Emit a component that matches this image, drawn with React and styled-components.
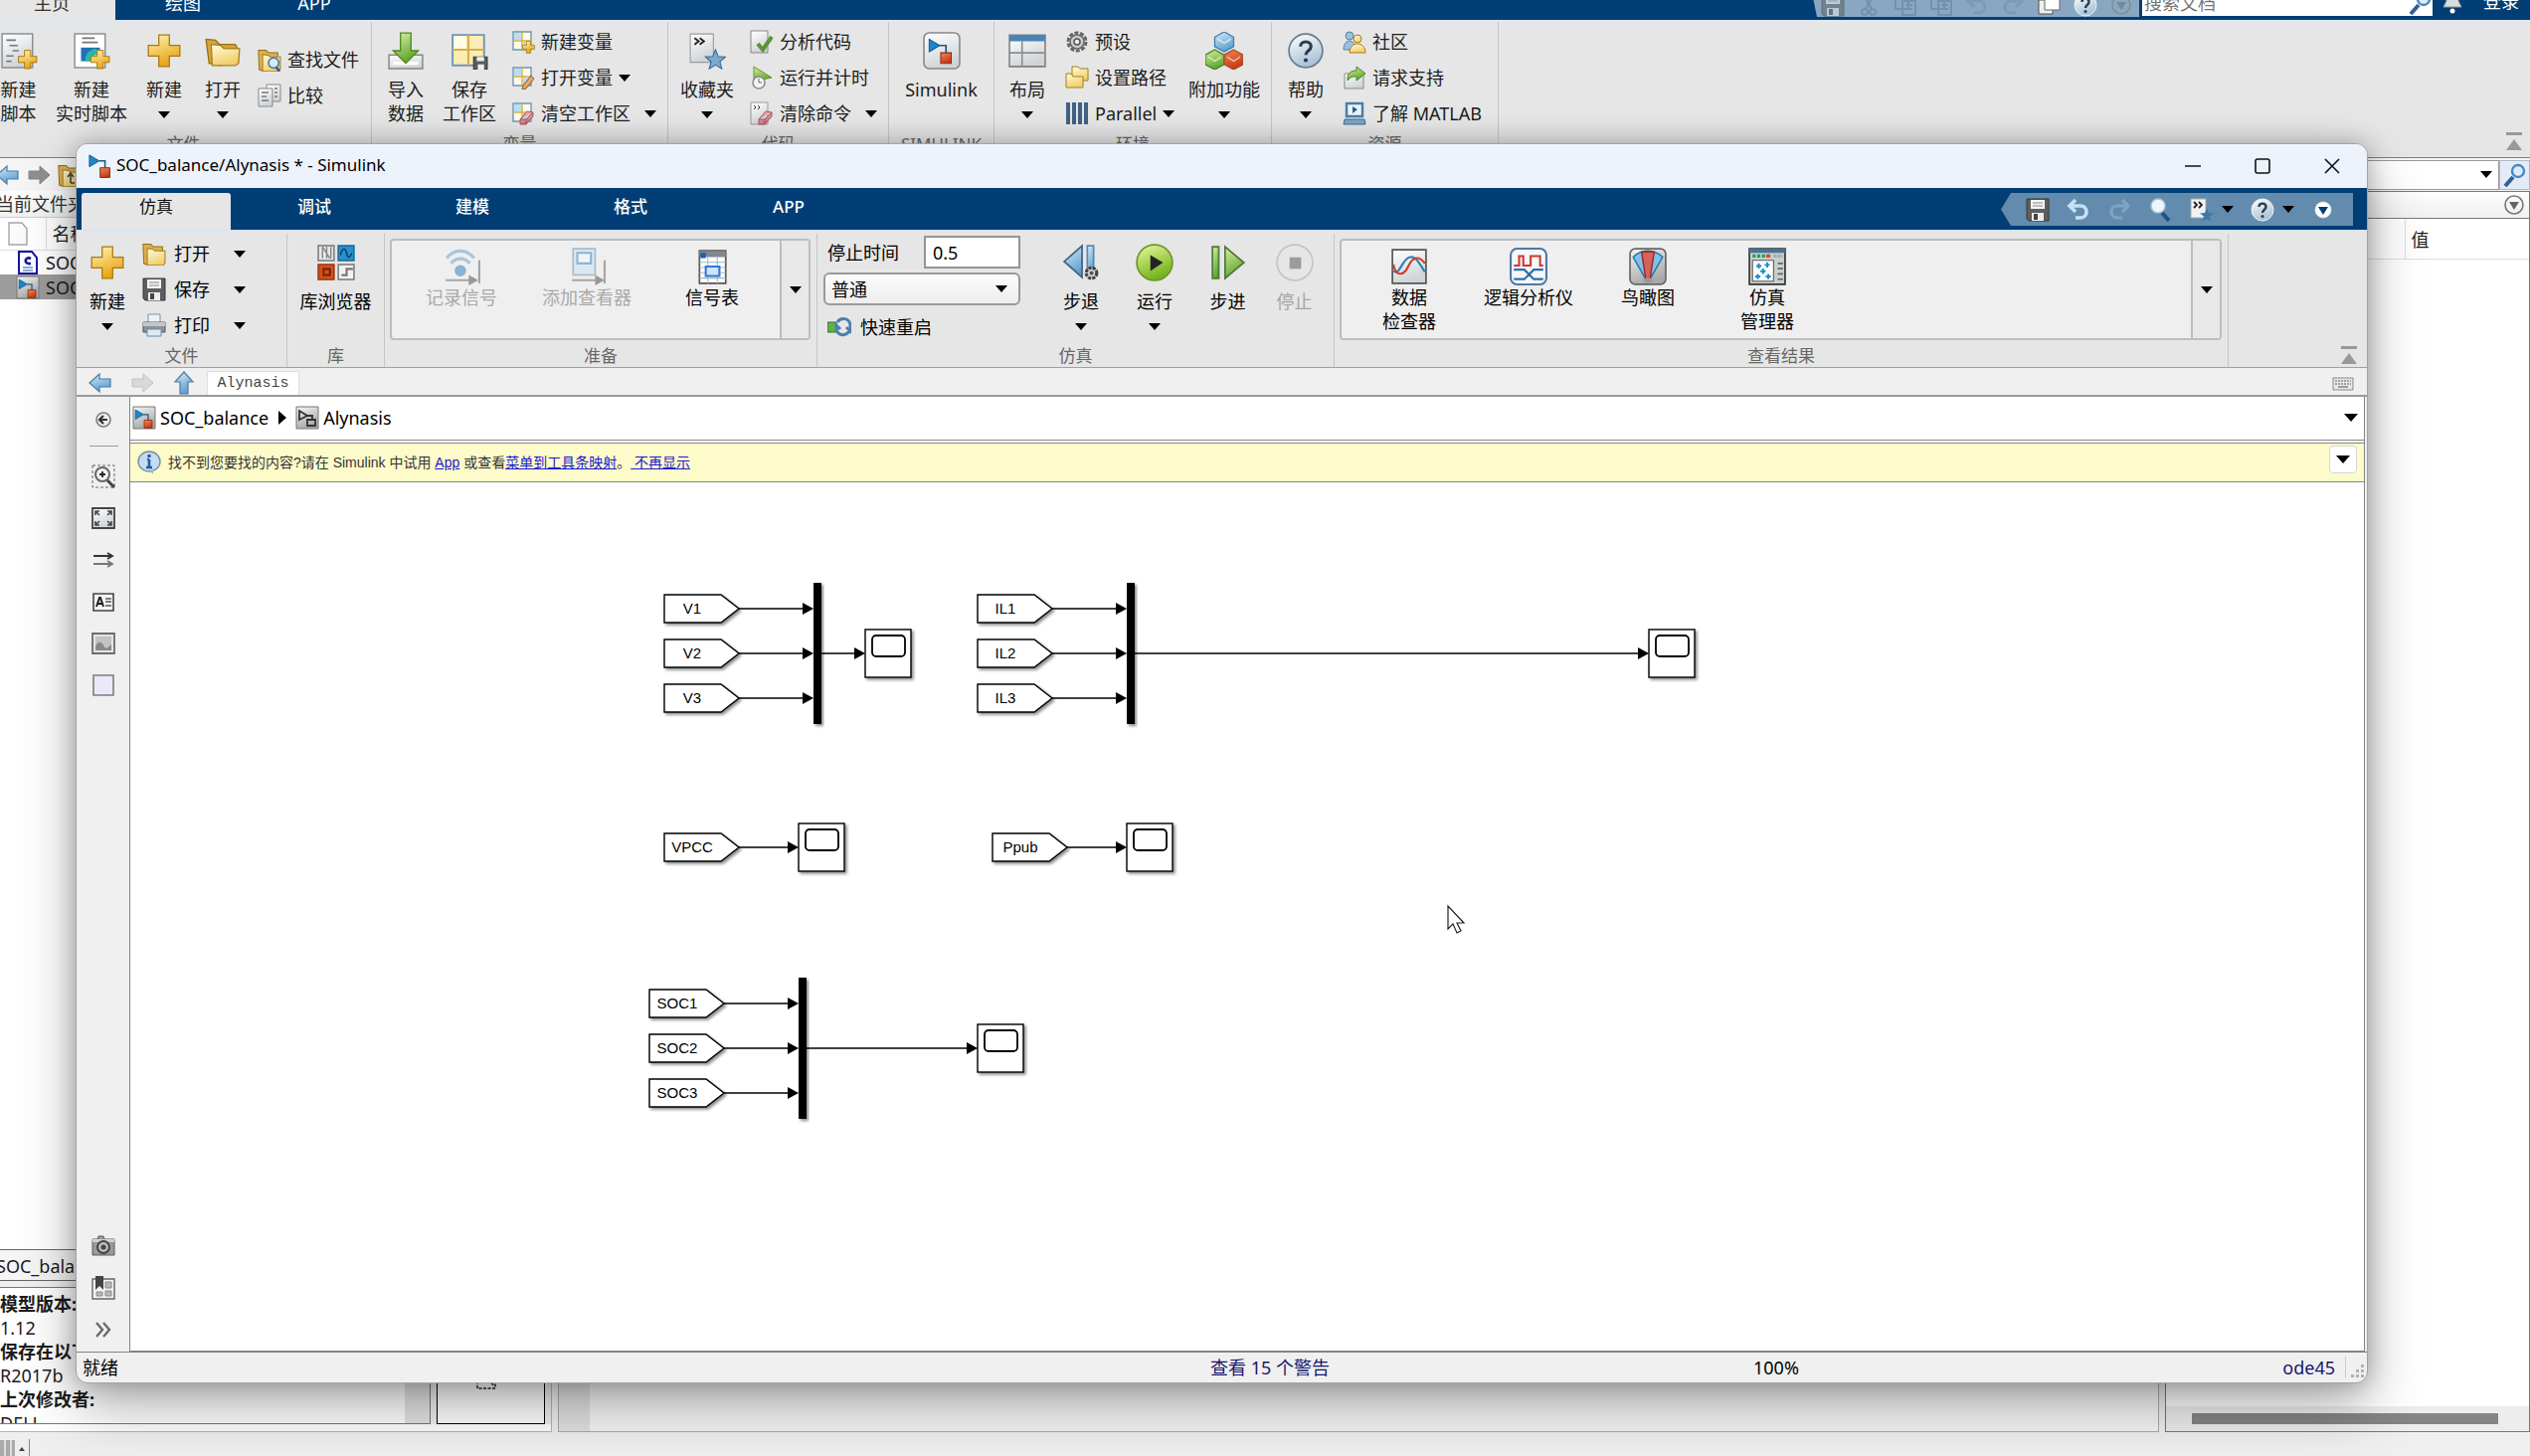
import styled, { createGlobalStyle, css } from "styled-components"
import { useState } from "react"

/* ---------- shared icon parts ---------- */

function Gradients() {
    const list = [
        ["gold", "#fff6b8", "#e9a514"],
        ["folder", "#fffbe0", "#f2cf6c"],
        ["paper", "#ffffff", "#cfd4d8"],
        ["steel", "#f6f6f6", "#a8a8a8"],
        ["sky", "#d8ecfa", "#5e9fce"],
        ["leaf", "#d9f0a4", "#5fa62c"],
        ["pink", "#f8c9c9", "#c9717a"],
        ["navy", "#8fb2ce", "#2d5f8e"],
        ["rust", "#f08a5c", "#c63a12"],
        ["ball", "#ffffff", "#a9c2d8"],
        ["lime", "#eafa9c", "#74b21c"],
    ]
    return (
        <Defs width="0" height="0">
            <defs>
                {list.map(([id, a, b]) => (
                    <linearGradient key={id} id={id} x1="0" y1="0" x2="0.4" y2="1">
                        <stop offset="0" stopColor={a} />
                        <stop offset="1" stopColor={b} />
                    </linearGradient>
                ))}
            </defs>
        </Defs>
    )
}

const Plus = ({ x = 0, y = 0, s = 1 }) => (
    <path transform={`translate(${x} ${y}) scale(${s})`} d="M11 1h10v10h10v10H21v10H11V21H1V11h10z" fill="url(#gold)" stroke="#a8780f" strokeWidth={1.2 / Math.sqrt(s)} />
)

const Page = ({ fill = "url(#paper)" }) => (
    <path d="M2 2h29v32H2z" fill={fill} stroke="#8b9096" strokeWidth="1.4" />
)

const Folder = () => (
    <>
        <path d="M1 3h9l3 3h11v5l-16 17-6-2z" fill="#dcb055" stroke="#96700f" strokeWidth="1.200" />
        <path d="M6 8l7 1 2 2h12v14l-2 3H6z" fill="url(#folder)" stroke="#a57f1c" strokeWidth="1.200" />
    </>
)

const Eraser = () => (
    <path d="M9 18l7-8 6 1v4l-7 8H9z M9 18h6l7-7M15 18v5" fill="url(#pink)" stroke="#a8525c" />
)

const Grid4 = () => (
    <>
        <path d="M2 2h18v18H2z" fill="#fffbe6" stroke="#6f95b5" strokeWidth="1.4" />
        <path d="M3 3h7v7H3zM12 12h7v7h-7z" fill="#bcdcf2" />
        <path d="M11 2v18M2 11h18" stroke="#d7ae44" strokeWidth="1.4" />
    </>
)

const SimLink = () => (
    <>
        <path d="M4 4l10 6-10 6z" fill="#1d87c9" stroke="#0d5b91" />
        <path d="M14 10h6v8" fill="none" stroke="#25577c" strokeWidth="1.6" />
        <path d="M15 17h10v10H15z" fill="url(#rust)" stroke="#8a2b0c" />
    </>
)

const BIG = {
    script: <><Page /><path d="M6 8h9M9 13h8M12 18h6M6 23h7M6 28h5" stroke="#707a84" strokeWidth="1.6" /><Plus x={17} y={17} s={0.58} /></>,
    live: <><Page fill="#fff" /><path d="M9 6h12M9 10h15" stroke="#777" strokeWidth="1.6" /><path d="M8 15h18v13H8z" fill="#2171b8" /><path d="M12 28c0-8 4-11 10-12l4 3v9z" fill="#2bb7a8" /><path d="M17 28c1-5 3-6 9-7v7z" fill="#f4e04d" /><Plus x={17} y={17} s={0.58} /></>,
    plus: <Plus x={2} y={2} />,
    folder: <g transform="translate(2 4)"><path d="M0 3l9 1 4 4h15l2 4-16 16-11-2z" fill="#d8a33b" stroke="#97700f" strokeWidth="1.200" /><path d="M5 8l9 1 3 3h15l-1 14-3 2H6z" fill="url(#folder)" stroke="#a57f1c" strokeWidth="1.200" /></g>,
    import: <><path d="M2 22h32v13H2z" fill="url(#paper)" stroke="#858585" strokeWidth="1.4" /><path d="M6 30h24" stroke="#fff" strokeWidth="3" /><path d="M13 1h10v17h7L18 30 6 18h7z" fill="url(#leaf)" stroke="#4f8520" strokeWidth="1.2" /></>,
    saveWs: <><path d="M2 3h30v29H2z" fill="#f9edb5" stroke="#6f95b5" strokeWidth="1.8" /><path d="M17 3v29M2 17h30" stroke="#d7ae44" strokeWidth="2" /><path d="M3 4h12v12H3z" fill="#fffce8" /><path d="M22 24h13v12H22z" fill="#5c5c5c" stroke="#333" /><path d="M25 24h7v4h-7zM26 31h6v5h-6z" fill="#eee" /></>,
    star: <><path d="M2 2h22v27H2z" fill="url(#paper)" stroke="#999" /><path d="M6 6l4 3-4 3M11 6l4 3-4 3" fill="none" stroke="#222" strokeWidth="1.8" /><path d="M26 17l2.600 6.500 7 .4-5.400 4.500 1.800 6.800-6-3.700-6 3.700 1.800-6.800-5.400-4.500 7-.4z" fill="#7aa9cf" stroke="#3b6a92" /></>,
    simulink: <><rect x="1" y="1" width="34" height="34" rx="5" fill="url(#paper)" stroke="#888" strokeWidth="1.5" /><g transform="translate(2 3)"><SimLink /></g></>,
    layout: <><path d="M1 3h34v30H1z" fill="url(#paper)" stroke="#808080" strokeWidth="1.5" /><path d="M1 3h34v6H1z" fill="#4c83b4" /><path d="M13 9v24M1 20h34" stroke="#8d8d8d" strokeWidth="1.5" /></>,
    addons: <g strokeWidth="1.200"><path d="M18 0l9 5v9l-9 5-9-5V5z" fill="url(#sky)" stroke="#3f7bac" /><path d="M9 17l9 5v9l-9 5-9-5v-9z" fill="url(#leaf)" stroke="#3f8120" /><path d="M27 17l9 5v9l-9 5-9-5v-9z" fill="url(#rust)" stroke="#a84a22" /><path d="M12 7l6 4 6-4M3 24l6 4 6-4M21 24l6 4 6-4" fill="none" stroke="#fff" opacity=".7" /></g>,
    help: <><circle cx="18" cy="18" r="16" fill="url(#ball)" stroke="#6b7c8c" strokeWidth="1.600" /><path d="M13 14c0-6 10-6 10 0 0 4-5 4-5 8" fill="none" stroke="#2a3d50" strokeWidth="3" /><circle cx="18" cy="27" r="2" fill="#2a3d50" /></>,
    library: <g strokeWidth="1.400"><path d="M1 2h15v14H1z" fill="#e8e8e8" stroke="#777" /><path d="M5 3v11M9 3v11M13 3v11M5 3l7 11" fill="none" stroke="#888" /><path d="M20 2h15v14H20z" fill="#2790cf" stroke="#14679c" /><path d="M22 11c2-8 5-7 6-2s3 5 5 0" fill="none" stroke="#0c3f66" /><path d="M1 20h15v14H1z" fill="#d84e1c" stroke="#963008" /><path d="M6 24h6v6H6z" fill="none" stroke="#7d2404" strokeWidth="2" /><path d="M20 20h15v14H20z" fill="#f2f2f2" stroke="#777" /><path d="M23 30h5v-6h6" fill="none" stroke="#777" strokeWidth="2" /></g>,
    logSignal: <g fill="none" stroke="#a9c6da" strokeWidth="3"><path d="M4 10c7-9 19-9 26 0M8 15c5-6 13-6 18 0" /><circle cx="17" cy="22" r="4" fill="#8ab3d1" stroke="#8ab3d1" /><path d="M3 31h23M35 12v22" stroke="#a5a5a5" strokeWidth="2" /><path d="M25 26l9 5-9 5z" fill="#999" stroke="none" /></g>,
    viewer: <><path d="M5 1h21v25H5z" fill="#dce8f1" stroke="#a5bccd" strokeWidth="1.600" /><path d="M9 5h13v10H9z" fill="#edf4fa" stroke="#8db3d4" strokeWidth="2" /><path d="M4 31h23M35 12v22" stroke="#a5a5a5" strokeWidth="2" /><path d="M26 26l9 5-9 5z" fill="#999" /></>,
    table: <><path d="M6 3h25v31H6z" fill="#fff" stroke="#555" strokeWidth="1.600" /><path d="M6 3h25v6H6z" fill="#7e8890" /><path d="M7 5h5v5H7z" fill="#1f5ca8" /><path d="M6 14h25M6 19h25M6 24h25M6 29h25M14 9v25M23 9v25" stroke="#9fb6cb" /><path d="M12 18h13v9H12z" fill="#cfe3fa" stroke="#3277d4" strokeWidth="2" /></>,
    stepBack: <><path d="M19 2v30L2 17z" fill="url(#sky)" stroke="#46617a" strokeWidth="1.600" /><path d="M24 2h6v28h-6z" fill="url(#sky)" stroke="#5588b3" strokeWidth="1.600" /><circle cx="28" cy="28" r="5" fill="#ddd" stroke="#444" strokeWidth="3" strokeDasharray="3 1" /><circle cx="28" cy="28" r="2" fill="#555" /></>,
    run: <><circle cx="18" cy="18" r="17" fill="url(#lime)" stroke="#6f9630" strokeWidth="1.600" /><path d="M14 11l12 7-12 8z" fill="#222" /></>,
    stepFwd: <><path d="M3 3h6v30H3z" fill="url(#leaf)" stroke="#4a7a38" strokeWidth="1.600" /><path d="M15 3v30l18-15z" fill="url(#leaf)" stroke="#4f7540" strokeWidth="1.600" /></>,
    stop: <><circle cx="18" cy="18" r="17" fill="#e6e6e6" stroke="#c4c4c4" strokeWidth="1.600" /><path d="M13 13h11v11H13z" fill="#9b9b9b" /></>,
    inspector: <><path d="M2 2h32v32H2z" fill="url(#paper)" stroke="#555" strokeWidth="1.600" /><path d="M3 22c6 6 8-12 16-13 6-1 9 7 14 14" fill="none" stroke="#2f7fb8" strokeWidth="2" /><path d="M3 16c2 12 10 11 14 2s10-11 16-3" fill="none" stroke="#cf3c2c" strokeWidth="2" /></>,
    logic: <><rect x="1" y="1" width="34" height="34" rx="6" fill="#f4f8fd" stroke="#54779c" strokeWidth="2" /><path d="M4 17h5V8h4v9h7V8h9v9h3" fill="none" stroke="#cf3b2f" strokeWidth="2" /><path d="M4 21h10l9 9h9M4 30h10l9-9h9" fill="none" stroke="#2f6ea7" strokeWidth="2" /></>,
    bird: <><rect x="1" y="1" width="34" height="34" rx="5" fill="url(#steel)" stroke="#666" strokeWidth="1.600" /><path d="M4 9c8-8 20-8 28 0L20 30h-4z" fill="#7fc1ec" stroke="#2d74a8" strokeWidth="1.400" /><path d="M12 4h12l-4 26h-4z" fill="#d4645a" stroke="#9c2a22" strokeWidth="1.400" /><path d="M14 29h8v4h-8z" fill="#999" /></>,
    manager: <><path d="M1 1h34v34H1z" fill="#c9cfcc" stroke="#333" strokeWidth="1.600" /><path d="M1 1h34v4H1z" fill="#47709a" /><path d="M4 8h17" stroke="#18a558" strokeWidth="3" strokeDasharray="3 1.500" /><path d="M17 8h4" stroke="#e2452c" strokeWidth="3" /><path d="M24 8h9" stroke="#aaa" strokeWidth="3" strokeDasharray="3 1" /><path d="M4 12h20v20H4z" fill="#fff" stroke="#555" /><path d="M10 15v5M7.500 17.500h5M18 14v5M15.500 16.500h5M14 20v5M11.500 22.500h5M9 25v5M6.500 27.500h5M19 25v5M16.500 27.500h5" stroke="#1c8cc4" strokeWidth="1.800" /><path d="M28 15h5M28 20h5M28 25h5M28 30h5" stroke="#666" strokeWidth="1.500" /></>,
}

const SMALL = {
    find: <g transform="scale(.85)"><Folder /><circle cx="19" cy="18" r="6" fill="#d6ebf9" stroke="#597fa3" strokeWidth="2" /><path d="M22 23l4 5" stroke="#2e5d91" strokeWidth="3" /></g>,
    compare: <><path d="M9 1h14v17H9z" fill="url(#paper)" stroke="#888" /><path d="M1 5h14v18H1z" fill="url(#paper)" stroke="#888" /><path d="M4 9h7M4 13h5M4 17h7M17 5h3M17 9h3M17 13h3" stroke="#777" strokeWidth="1.400" /></>,
    newVar: <><Grid4 /><Plus x={11} y={11} s={0.4} /></>,
    openVar: <><Grid4 /><path d="M12 20l8-10 3 3-8 10-4 1z" fill="#e8a861" stroke="#7a5a35" /></>,
    clearVar: <><Grid4 /><Eraser /></>,
    analyze: <><path d="M1 1h17v22H1z" fill="url(#paper)" stroke="#888" /><path d="M8 14l5 6 9-13" fill="none" stroke="#5c9436" strokeWidth="4" /></>,
    timer: <><path d="M4 1l18 11-18 4z" fill="url(#leaf)" stroke="#67923b" /><circle cx="9" cy="17" r="6" fill="#f4f4f4" stroke="#888" strokeWidth="1.500" /><path d="M9 13v4h3" fill="none" stroke="#666" /></>,
    clearCmd: <><path d="M1 1h17v22H1z" fill="url(#paper)" stroke="#999" /><path d="M4 4l2 2-2 2M8 4l2 2-2 2" fill="none" stroke="#333" /><Eraser /></>,
    gear: <><circle cx="12" cy="12" r="9" fill="none" stroke="#666" strokeWidth="3" strokeDasharray="4 1.650" /><circle cx="12" cy="12" r="7" fill="#ccc" stroke="#666" strokeWidth="1.500" /><circle cx="12" cy="12" r="3" fill="#eee" stroke="#555" strokeWidth="1.500" /></>,
    path: <g stroke="#a57f1c"><path d="M7 1h6l2 2h8v12H7z" fill="url(#folder)" /><path d="M1 8h5l2 3h10v11H1z" fill="url(#folder)" /></g>,
    parallel: <path d="M3 1v22M9 1v22M15 1v22M21 1v22" stroke="#3f6285" strokeWidth="4" />,
    people: <><circle cx="7" cy="6" r="4" fill="#9cc1dd" stroke="#5685a8" /><path d="M1 20c0-12 12-12 12 0z" fill="#9cc1dd" stroke="#5685a8" /><path d="M7 23c0-12 16-12 16 0z" fill="url(#folder)" stroke="#a57f1c" /><circle cx="15" cy="9" r="4" fill="url(#folder)" stroke="#a57f1c" /></>,
    support: <><path d="M2 8h19v15H2z" fill="url(#paper)" stroke="#888" /><path d="M5 12c1-6 5-7 9-7V1l9 7-9 7v-4c-4 0-6 0-9 4z" fill="url(#leaf)" stroke="#4b8425" /></>,
    learn: <><path d="M4 2h16v13H4z" fill="#eaf3fb" stroke="#4b7ba8" strokeWidth="2.400" /><path d="M10 5l5 3-5 4z" fill="#2c5d8c" /><path d="M2 18h20l1 5H1z" fill="#7fa5c6" stroke="#3d6b95" /></>,
    open: <g transform="scale(.85)"><Folder /></g>,
    save: <><path d="M1 1h22v22H3l-2-2z" fill="#5e5e5e" stroke="#383838" /><path d="M5 2h14v9H5z" fill="#f3f3f3" /><path d="M7 5h10M7 8h10" stroke="#888" /><path d="M6 15h12v8H6z" fill="#ededed" /><path d="M8 16h4v6H8z" fill="#444" /></>,
    print: <><path d="M6 1h12v9H6z" fill="#eaf3fb" stroke="#7a93aa" /><path d="M1 9h22v10H1z" fill="#8c9299" stroke="#555" /><path d="M1 9h22v4H1z" fill="#c3c7cb" /><path d="M5 16h14v7H5z" fill="#dbeaf7" stroke="#6a8fb0" /></>,
    restart: <><path d="M0 7h9v10H0z" fill="#5cb342" stroke="#3c6f2b" /><path d="M10 7c3-5 12-5 13 3v6l-4-4M22 16c-4 6-12 4-13-2v-4l4 4" fill="none" stroke="#4b7fae" strokeWidth="3" /></>,
    undo: <path d="M3 8h11c8 0 8 12 0 12H9M9 2L3 8l6 6" fill="none" stroke="#c7e0f4" strokeWidth="3.600" />,
    undoGrey: <path d="M3 8h11c8 0 8 12 0 12H9M9 2L3 8l6 6" fill="none" stroke="#6f8da6" strokeWidth="3" />,
    redo: <path d="M21 8H10c-8 0-8 12 0 12h5M15 2l6 6-6 6" fill="none" stroke="#7fa3c2" strokeWidth="3.200" />,
    redoGrey: <path d="M21 8H10c-8 0-8 12 0 12h5M15 2l6 6-6 6" fill="none" stroke="#6f8da6" strokeWidth="3" />,
    zoom: <><path d="M14 15l7 8" stroke="#23507e" strokeWidth="4" /><circle cx="10" cy="8" r="7" fill="#eef6fb" stroke="#a8c4d8" strokeWidth="1.500" /></>,
    lens: <><path d="M10 14l-8 9" stroke="#315f9c" strokeWidth="4" /><circle cx="15" cy="8" r="6" fill="#dcecfb" stroke="#4a86c4" strokeWidth="2.400" /></>,
    fav: <><path d="M1 1h15v19H1z" fill="#f2f2f2" stroke="#aaa" /><path d="M4 4l3 3-3 3M9 4l3 3-3 3" fill="none" stroke="#222" strokeWidth="1.800" /><path d="M17 11l2 4 5 .5-4 3 1 5-4-2.500-4 2.500 1-5-4-3 5-.5z" fill="#3d77a8" /></>,
    helpSm: <><circle cx="12" cy="12" r="11" fill="url(#ball)" stroke="#e9f2fa" /><path d="M8.500 9c0-4.500 7-4.500 7 0 0 3-3.500 3-3.500 6" fill="none" stroke="#2b3d50" strokeWidth="2.400" /><circle cx="12" cy="18.500" r="1.500" fill="#2b3d50" /></>,
    more: <><circle cx="12" cy="12" r="8" fill="#fff" stroke="#cfe0ef" /><path d="M7 9h10l-5 8z" fill="#003e75" /></>,
    moreGrey: <><circle cx="12" cy="12" r="9" fill="none" stroke="#777" strokeWidth="1.600" /><path d="M7 9h10l-5 8z" fill="#666" /></>,
    cut: <path d="M7 2l8 14M17 2L9 16M8 16a3 3 0 1 0 .1 0M16 16a3 3 0 1 0 .1 0" fill="none" stroke="#5f7c95" strokeWidth="2" />,
    copy: <path d="M2 2h13v14H2zM9 8h13v14H9zM5 6h7M12 12h7M12 16h7" fill="none" stroke="#5f7c95" strokeWidth="2" />,
    windows: <><path d="M2 7h14v14H2z" fill="#eee" stroke="#555" /><path d="M8 3h15v14H8z" fill="#fff" stroke="#666" /></>,
    bell: <><path d="M12 1c6 0 6 6 6 10l3 6H3l3-6c0-4 0-10 6-10z" fill="#d9dde0" stroke="#9a9a9a" /><circle cx="12" cy="21" r="2.500" fill="#fff" /></>,
    back: <path d="M1 12l10-9v5h11v8H11v5z" fill="url(#sky)" stroke="#4a7ba3" strokeWidth="1.200" />,
    forward: <path d="M23 12L13 3v5H2v8h11v5z" fill="#d9d9d9" stroke="#c2c2c2" />,
    forwardDark: <path d="M23 12L13 3v5H2v8h11v5z" fill="#8f8f8f" stroke="#858585" />,
    up: <path d="M12 1l9 10h-5v12H8V11H3z" fill="url(#sky)" stroke="#4a7ba3" strokeWidth="1.200" />,
    upFolder: <><g transform="scale(.85)"><Folder /></g><path d="M13 20v-8M10 14l3-4 3 4M13 20h4" fill="none" stroke="#444" strokeWidth="1.600" /></>,
    simFile: <><path d="M1 1h22v22H1z" fill="url(#steel)" stroke="#777" /><g transform="scale(.8) translate(0 1)"><SimLink /></g></>,
    subFile: <><path d="M1 1h22v22H1z" fill="url(#steel)" stroke="#777" /><path d="M4 5l8 5-8 4zM12 10h5v5M12 14h8v6h-8z" fill="none" stroke="#333" strokeWidth="1.800" /></>,
    simApp: <g transform="translate(-3 -3) scale(.98)"><SimLink /></g>,
    info: <><ellipse cx="12" cy="11" rx="11" ry="10" fill="#c5dcf0" stroke="#7b8ea0" strokeWidth="1.400" /><path d="M12 20l4 4v-5z" fill="#9db8cf" /><path d="M12 9v8M9 17h6M10 9h2" stroke="#1d5fa8" strokeWidth="2.600" /><circle cx="12" cy="5.500" r="1.800" fill="#1d5fa8" /></>,
    hide: <><circle cx="12" cy="12" r="7" fill="#eee" stroke="#7c7c7c" strokeWidth="1.600" /><path d="M8 12h8M12 8l-4 4 4 4" fill="none" stroke="#333" strokeWidth="2.200" /></>,
    fitSel: <><path d="M1 1h22v22H1z" fill="none" stroke="#666" strokeDasharray="3 2" /><circle cx="11" cy="10" r="7" fill="#f3f3f3" stroke="#666" strokeWidth="2" /><path d="M8 10h6M11 7v6" stroke="#222" strokeWidth="1.800" /><path d="M16 16l7 7" stroke="#444" strokeWidth="3" /></>,
    fit: <><path d="M1 2h22v20H1z" fill="url(#paper)" stroke="#444" strokeWidth="1.800" /><path d="M4 9V5h4M4 5l4 4M20 9V5h-4M20 5l-4 4M4 15v4h4M4 19l4-4M20 15v4h-4M20 19l-4-4" fill="none" stroke="#444" strokeWidth="1.600" /></>,
    arrows: <g fill="none" strokeWidth="1.800"><path d="M2 8h19M16 5l5 3-5 3" stroke="#333" /><path d="M2 16h19M16 13l5 3-5 3" stroke="#777" /></g>,
    image: <><path d="M1 2h22v20H1z" fill="#e4e4e4" stroke="#6d6d6d" strokeWidth="1.800" /><path d="M4 5h16v14H4z" fill="#c2c2c2" /><path d="M4 15c3-6 6-5 8-1s4 3 8-1v6H4z" fill="#888" /></>,
    area: <path d="M2 2h20v20H2z" fill="#e9e9f7" stroke="#7c7c84" strokeWidth="1.600" />,
    annot: <><path d="M2 4h20v17H2z" fill="#f5f5f5" stroke="#444" strokeWidth="1.600" /><path d="M5 17l3-9h1l3 9M6 14h5" fill="none" stroke="#222" strokeWidth="2" /><path d="M14 9h6M14 12h6M14 16h6" stroke="#555" strokeWidth="1.400" /></>,
    camera: <><path d="M1 5h5l1-3h5l1 3h10v16H1z" fill="#9a9a9a" stroke="#5b5b5b" /><path d="M1 5h22v3H1z" fill="#d0d0d0" /><circle cx="12" cy="13" r="6" fill="#bbb" stroke="#444" strokeWidth="2" /><circle cx="12" cy="13" r="2.500" fill="#444" /></>,
    bookmark: <><path d="M1 3h22v20H1z" fill="#f3f3f3" stroke="#666" strokeWidth="1.400" /><path d="M14 6h6v6h-6zM14 15h6v5h-6zM5 16h6v4H5z" fill="#b9b9b9" stroke="#888" /><path d="M4 0h8v14l-4-4-4 4z" fill="#444" /></>,
    chevrons: <path d="M5 5l6 7-6 7M12 5l6 7-6 7" fill="none" stroke="#6a6a6a" strokeWidth="2.400" />,
    keyboard: <><path d="M2 7h20v12H2z" fill="#e8e8e8" stroke="#888" /><path d="M4 10h16M4 13h16" stroke="#888" strokeWidth="1.600" strokeDasharray="2 1" /><path d="M7 16h10" stroke="#888" strokeWidth="1.600" /></>,
    collapse: <><path d="M4 3h16v3H4z" fill="#999" /><path d="M12 10l8 11H4z" fill="#999" /></>,
    doc: <path d="M3 1h13l5 6v16H3z" fill="#fafafa" stroke="#a5a5a5" strokeWidth="1.400" />,
    cFile: <><path d="M3 1h13l5 6v16H3z" fill="#fff" stroke="#1515a8" strokeWidth="2" /><path d="M15 8c-6-3-8 6 0 5" fill="none" stroke="#1515a8" strokeWidth="2.600" /><path d="M7 17h10M7 20h10" stroke="#6c8fc8" strokeWidth="1.500" /></>,
}

const BigIcon = ({ name }) => (
    <svg width="38" height="38" viewBox="0 0 36 36" aria-hidden="true">{BIG[name]}</svg>
)

const Icon = ({ name, size = 24 }) => (
    <svg width={size} height={size} viewBox="0 0 24 24" aria-hidden="true">{SMALL[name]}</svg>
)

/* ---------- ribbon building blocks ---------- */

function Big({ icon, lines, width, caret, disabled }) {
    return (
        <BigButton $width={width} disabled={disabled}>
            <BigIcon name={icon} />
            <BigLabel>
                {lines.map(line => <span key={line}>{line}</span>)}
                {caret && <CaretLine><Caret /></CaretLine>}
            </BigLabel>
        </BigButton>
    )
}

// caret: true sits next to the text, "far" is a split button with its own arrow
function Rows({ items, width }) {
    return (
        <RowColumn $width={width}>
            {items.map(([icon, text, caret]) => (
                <RowButton key={text} $far={caret === "far"}>
                    <Icon name={icon} />
                    <span>{text}</span>
                    {caret && <Caret />}
                </RowButton>
            ))}
        </RowColumn>
    )
}

function Group({ title, width, grow, children }) {
    return (
        <GroupBox $width={width} $grow={grow}>
            <GroupBody>{children}</GroupBody>
            <GroupTitle>{title}</GroupTitle>
        </GroupBox>
    )
}

/* ---------- main MATLAB window ---------- */

function MatlabWindow() {
    return (
        <Matlab>
            <TopBar>
                <TopTab $active>主页</TopTab>
                <TopTab>绘图</TopTab>
                <TopTab>APP</TopTab>
                <TopTools>
                    {["save", "cut", "copy", "copy", "undoGrey", "redoGrey"].map((name, i) => (
                        <ToolButton key={i} disabled aria-label={name}><Icon name={name} /></ToolButton>
                    ))}
                    <ToolButton aria-label="windows"><Icon name="windows" /></ToolButton>
                    <ToolButton aria-label="help"><Icon name="helpSm" /></ToolButton>
                    <ToolButton disabled aria-label="more"><Icon name="moreGrey" /></ToolButton>
                </TopTools>
                <SearchBox>
                    <input aria-label="搜索文档" placeholder="搜索文档" />
                    <Icon name="lens" />
                </SearchBox>
                <TopLink aria-label="notifications"><Icon name="bell" /></TopLink>
                <TopLink>登录</TopLink>
            </TopBar>

            <MainRibbon>
                <Group title="文件" width={378}>
                    <Spacer $width={4} />
                    <Big icon="script" lines={["新建", "脚本"]} width={37} />
                    <Spacer $width={14} />
                    <Big icon="live" lines={["新建", "实时脚本"]} width={82} />
                    <Big icon="plus" lines={["新建"]} width={64} caret />
                    <Big icon="folder" lines={["打开"]} width={54} caret />
                    <Spacer $width={8} />
                    <FileRows>
                        <RowButton><Icon name="find" /><span>查找文件</span></RowButton>
                        <RowButton><Icon name="compare" /><span>比较</span></RowButton>
                    </FileRows>
                </Group>
                <Group title="变量" width={298}>
                    <Big icon="import" lines={["导入", "数据"]} width={68} />
                    <Big icon="saveWs" lines={["保存", "工作区"]} width={60} />
                    <Spacer $width={12} />
                    <Rows items={[["newVar", "新建变量"], ["openVar", "打开变量", true], ["clearVar", "清空工作区", "far"]]} />
                </Group>
                <Group title="代码" width={222}>
                    <Big icon="star" lines={["收藏夹"]} width={78} caret />
                    <Spacer $width={4} />
                    <Rows items={[["analyze", "分析代码"], ["timer", "运行并计时"], ["clearCmd", "清除命令", "far"]]} />
                </Group>
                <Group title="SIMULINK" width={106}>
                    <Big icon="simulink" lines={["Simulink"]} width={105} />
                </Group>
                <Group title="环境" width={279}>
                    <Big icon="layout" lines={["布局"]} width={66} caret />
                    <Spacer $width={5} />
                    <Rows width={115} items={[["gear", "预设"], ["path", "设置路径"], ["parallel", "Parallel", true]]} />
                    <Big icon="addons" lines={["附加功能"]} width={90} caret />
                </Group>
                <Group title="资源" width={228}>
                    <Big icon="help" lines={["帮助"]} width={68} caret />
                    <Spacer $width={3} />
                    <Rows items={[["people", "社区"], ["support", "请求支持"], ["learn", "了解 MATLAB"]]} />
                </Group>
                <CollapseButton aria-label="collapse"><Icon name="collapse" /></CollapseButton>
            </MainRibbon>

            <AddressBar>
                <ToolButton aria-label="back"><Icon name="back" /></ToolButton>
                <ToolButton aria-label="forward"><Icon name="forwardDark" /></ToolButton>
                <ToolButton aria-label="up"><Icon name="upFolder" /></ToolButton>
                <AddressField><Caret /></AddressField>
                <AddressSearch aria-label="search"><Icon name="lens" /></AddressSearch>
            </AddressBar>

            <Panels>
                <LeftPanel>
                    <PanelHead>当前文件夹</PanelHead>
                    <FileTable>
                        <thead>
                            <tr><th><Icon name="doc" /></th><th>名称</th></tr>
                        </thead>
                        <tbody>
                            <tr><td><Icon name="cFile" /></td><td>SOC_balance</td></tr>
                            <Selected><td><Icon name="simFile" /></td><td>SOC_balance</td></Selected>
                        </tbody>
                    </FileTable>
                    <DetailHead>SOC_balance</DetailHead>
                    <DetailBody>
                        <DetailText>
                            <dt>模型版本:</dt>
                            <dd>1.12</dd>
                            <dt>保存在以下版本:</dt>
                            <dd>R2017b</dd>
                            <dt>上次修改者:</dt>
                            <dd>DELL</dd>
                        </DetailText>
                        <DetailScroll />
                        <Thumbnail>
                            <svg width="30" height="16" viewBox="0 0 30 16" aria-hidden="true">
                                <path d="M1 1h4M1 7h4M8 4h18v9H8zM14 13h5M20 1h6M14 7h4M22 8l3 2" fill="none" stroke="#222" strokeWidth="1.500" strokeDasharray="3 1.500" />
                            </svg>
                        </Thumbnail>
                    </DetailBody>
                </LeftPanel>
                <CenterPanel><Gutter /></CenterPanel>
                <RightPanel>
                    <PanelHead $end><Icon name="moreGrey" /></PanelHead>
                    <VarTable>
                        <thead><tr><th /><th>值</th></tr></thead>
                    </VarTable>
                    <ScrollTrack><ScrollThumb /></ScrollTrack>
                </RightPanel>
            </Panels>
            <MainStatus>
                <Stripes />
                <UpMark />
            </MainStatus>
        </Matlab>
    )
}

/* ---------- block diagram ---------- */

function FromTag({ x, y, label }) {
    return (
        <g>
            <path d={`M${x} ${y - 14}h57l18 14-18 14h-57z`} fill="#fff" stroke="#000" strokeWidth="1.400" filter="url(#shade)" />
            <text x={x + 28} y={y + 5} textAnchor="middle">{label}</text>
        </g>
    )
}

function Wire({ x1, x2, y }) {
    return (
        <g>
            <path d={`M${x1} ${y}H${x2 - 4}`} stroke="#000" strokeWidth="1.400" />
            <path d={`M${x2 - 11} ${y - 6}l11 6-11 6z`} />
        </g>
    )
}

function Scope({ x, y }) {
    return (
        <g>
            <rect x={x} y={y - 24} width="46" height="48" fill="#fff" stroke="#000" strokeWidth="1.400" filter="url(#shade)" />
            <rect x={x + 7} y={y - 18} width="33" height="21" rx="4" fill="#fff" stroke="#000" strokeWidth="1.800" />
        </g>
    )
}

function MuxSet({ x, y, labels, scopeX }) {
    return (
        <g>
            {labels.map((label, i) => <FromTag key={label} x={x} y={y + (i - 1) * 45} label={label} />)}
            {labels.map((label, i) => <Wire key={label} x1={x + 75} x2={x + 150} y={y + (i - 1) * 45} />)}
            <rect x={x + 150} y={y - 71} width="8" height="142" filter="url(#shade)" />
            <Wire x1={x + 158} x2={scopeX} y={y} />
            <Scope x={scopeX} y={y} />
        </g>
    )
}

function Diagram() {
    return (
        <DiagramSvg>
            <defs>
                <filter id="shade" x="-20%" y="-20%" width="150%" height="150%">
                    <feDropShadow dx="2" dy="2" stdDeviation="1.500" floodOpacity=".45" />
                </filter>
            </defs>
            <MuxSet x={537} y={172} labels={["V1", "V2", "V3"]} scopeX={739} />
            <MuxSet x={852} y={172} labels={["IL1", "IL2", "IL3"]} scopeX={1527} />
            <FromTag x={537} y={367} label="VPCC" />
            <Wire x1={612} x2={672} y={367} />
            <Scope x={672} y={367} />
            <FromTag x={867} y={367} label="Ppub" />
            <Wire x1={942} x2={1002} y={367} />
            <Scope x={1002} y={367} />
            <MuxSet x={522} y={569} labels={["SOC1", "SOC2", "SOC3"]} scopeX={852} />
            <path d="M1325 426v23l5-5 4 9 4-2-4-8h7z" fill="#fff" stroke="#222" strokeWidth="1.200" />
        </DiagramSvg>
    )
}

/* ---------- Simulink window ---------- */

const TABS = ["仿真", "调试", "建模", "格式", "APP"]

function SimulinkWindow() {
    const [tab, setTab] = useState("仿真")
    const [stopTime, setStopTime] = useState("0.5")

    return (
        <Window>
            <TitleBar>
                <Icon name="simApp" />
                <h1>SOC_balance/Alynasis * - Simulink</h1>
                <WinButton aria-label="minimize"><svg width="16" height="16"><path d="M0 8h16" stroke="#111" strokeWidth="1.400" /></svg></WinButton>
                <WinButton aria-label="maximize"><svg width="16" height="16"><rect x="1" y="1" width="14" height="14" rx="2" fill="none" stroke="#111" strokeWidth="1.600" /></svg></WinButton>
                <WinButton aria-label="close"><svg width="16" height="16"><path d="M1 1l14 14M15 1L1 15" stroke="#111" strokeWidth="1.600" /></svg></WinButton>
            </TitleBar>

            <TabBar>
                {TABS.map(name => (
                    <Tab key={name} $active={name === tab} onClick={() => setTab(name)}>{name}</Tab>
                ))}
                <QuickTools>
                    <ToolButton aria-label="save"><Icon name="save" /></ToolButton>
                    <ToolButton aria-label="undo"><Icon name="undo" /></ToolButton>
                    <ToolButton aria-label="redo"><Icon name="redo" /></ToolButton>
                    <ToolButton aria-label="find"><Icon name="zoom" /></ToolButton>
                    <SplitTool aria-label="favorites"><Icon name="fav" /><Caret /></SplitTool>
                    <SplitTool aria-label="help"><Icon name="helpSm" /><Caret /></SplitTool>
                    <ToolButton aria-label="more"><Icon name="more" /></ToolButton>
                </QuickTools>
            </TabBar>

            <SimRibbon>
                <Group title="文件" width={212}>
                    <Big icon="plus" lines={["新建"]} width={62} caret />
                    <Spacer $width={4} />
                    <Rows items={[["open", "打开", "far"], ["save", "保存", "far"], ["print", "打印", "far"]]} />
                </Group>
                <Group title="库" width={98}>
                    <Big icon="library" lines={["库浏览器"]} width={97} />
                </Group>
                <Group title="准备" width={435}>
                    <Gallery>
                        <GalleryItems $pad={7}>
                            <GalleryButton $width={126} disabled><BigIcon name="logSignal" /><span>记录信号</span></GalleryButton>
                            <GalleryButton $width={126} disabled><BigIcon name="viewer" /><span>添加查看器</span></GalleryButton>
                            <GalleryButton $width={126}><BigIcon name="table" /><span>信号表</span></GalleryButton>
                        </GalleryItems>
                        <GalleryMore aria-label="more"><Caret /></GalleryMore>
                    </Gallery>
                </Group>
                <Group title="仿真" width={520}>
                    <SimForm>
                        <TimeRow>
                            <label htmlFor="stop">停止时间</label>
                            <input id="stop" value={stopTime} onChange={e => setStopTime(e.target.value)} />
                        </TimeRow>
                        <SelectBox>
                            <select aria-label="mode" defaultValue="普通"><option>普通</option></select>
                            <Caret />
                        </SelectBox>
                        <RestartButton><Icon name="restart" /><span>快速重启</span></RestartButton>
                    </SimForm>
                    <Spacer $width={24} />
                    <Big icon="stepBack" lines={["步退"]} width={74} caret />
                    <Big icon="run" lines={["运行"]} width={74} caret />
                    <Big icon="stepFwd" lines={["步进"]} width={73} />
                    <Big icon="stop" lines={["停止"]} width={61} disabled />
                </Group>
                <Group title="查看结果" grow>
                    <Gallery>
                        <GalleryItems $pad={8}>
                            <GalleryButton $width={120}><BigIcon name="inspector" /><span>数据</span><span>检查器</span></GalleryButton>
                            <GalleryButton $width={120}><BigIcon name="logic" /><span>逻辑分析仪</span></GalleryButton>
                            <GalleryButton $width={120}><BigIcon name="bird" /><span>鸟瞰图</span></GalleryButton>
                            <GalleryButton $width={120}><BigIcon name="manager" /><span>仿真</span><span>管理器</span></GalleryButton>
                        </GalleryItems>
                        <GalleryMore aria-label="more"><Caret /></GalleryMore>
                    </Gallery>
                </Group>
                <RibbonEnd>
                    <CollapseButton aria-label="collapse"><Icon name="collapse" /></CollapseButton>
                </RibbonEnd>
            </SimRibbon>

            <NavBar>
                <ToolButton aria-label="back"><Icon name="back" /></ToolButton>
                <ToolButton aria-label="forward"><Icon name="forward" /></ToolButton>
                <ToolButton aria-label="up"><Icon name="up" /></ToolButton>
                <DocTab>Alynasis</DocTab>
                <NavEnd><Icon name="keyboard" /></NavEnd>
            </NavBar>

            <Work>
                <Palette>
                    <ToolButton aria-label="hide"><Icon name="hide" /></ToolButton>
                    <hr />
                    {["fitSel", "fit", "arrows", "annot", "image", "area"].map(name => (
                        <ToolButton key={name} aria-label={name}><Icon name={name} /></ToolButton>
                    ))}
                    <Fill />
                    {["camera", "bookmark", "chevrons"].map(name => (
                        <ToolButton key={name} aria-label={name}><Icon name={name} /></ToolButton>
                    ))}
                </Palette>
                <Editor>
                    <Crumbs>
                        <Icon name="simFile" />
                        <button>SOC_balance</button>
                        <CrumbArrow />
                        <Icon name="subFile" />
                        <button>Alynasis</button>
                        <CrumbEnd aria-label="history"><Caret $size={7} /></CrumbEnd>
                    </Crumbs>
                    <InfoBar>
                        <Icon name="info" />
                        <p>
                            找不到您要找的内容?请在 Simulink 中试用 <a href="#app">App</a> 或查看<a href="#map">菜单到工具条映射</a>。<a href="#hide"> 不再显示</a>
                        </p>
                        <InfoMore aria-label="more"><Caret $size={7} /></InfoMore>
                    </InfoBar>
                    <Canvas><Diagram /></Canvas>
                </Editor>
            </Work>

            <StatusBar>
                <span>就绪</span>
                <StatusLink href="#warnings">查看 15 个警告</StatusLink>
                <span>100%</span>
                <StatusLink $end href="#solver">ode45</StatusLink>
                <Grip>
                    <svg width="14" height="14" aria-hidden="true">
                        <path d="M10 0h3v3h-3zM5 5h3v3H5zM10 5h3v3h-3zM0 10h3v3H0zM5 10h3v3H5zM10 10h3v3h-3z" fill="#b0b0b0" />
                    </svg>
                </Grip>
            </StatusBar>
        </Window>
    )
}

export default function App() {
    return (
        <Desktop>
            <GlobalStyle />
            <Gradients />
            <MatlabWindow />
            <SimulinkWindow />
        </Desktop>
    )
}

/* ---------- styles ---------- */

const GlobalStyle = createGlobalStyle`
    * {
        box-sizing: border-box;
    }
    body {
        margin: 0;
        font-family: "Noto Sans", "Noto Sans CJK SC", sans-serif;
        font-size: 18px;
        line-height: 24px;
        color: #1c1c1c;
    }
    button, input, select {
        font: inherit;
        color: inherit;
    }
    button {
        padding: 0;
        border: 0;
        background: none;
        white-space: nowrap;
    }
    svg {
        flex: none;
        display: block;
    }
`

const Desktop = styled.div`
    position: relative;
    height: 100vh;
    overflow: hidden;
`

const Defs = styled.svg`
    position: absolute;
`

const Caret = styled.i`
    display: block;
    flex: none;
    width: 0;
    height: 0;
    border: ${p => p.$size || 6}px solid transparent;
    border-top: ${p => (p.$size || 6) + 1}px solid #000;
    border-bottom: 0;
`

const Spacer = styled.div`
    flex: none;
    width: ${p => p.$width}px;
`

const Fill = styled.div`
    flex: 1;
`

const ToolButton = styled.button`
    display: flex;
    align-items: center;
    justify-content: center;

    &:disabled {
        opacity: 0.5;
    }
`

const SplitTool = styled(ToolButton)`
    gap: 8px;
`

const Matlab = styled.div`
    display: flex;
    flex-direction: column;
    height: calc(100vh + 22px);
    margin: -22px 0 0 -4px;
    background: #efefef;
`

const TopBar = styled.div`
    display: flex;
    flex: none;
    height: 42px;
    background: #003e75;
`

const TopTab = styled.button`
    width: ${p => (p.$active ? "120px" : "132px")};
    padding: ${p => (p.$active ? "8px 8px 0 0" : "8px 0 0 4px")};
    color: ${p => (p.$active ? "#333" : "#fff")};
    background: ${p => (p.$active ? "#e6e6e6" : "none")};
`

const TopTools = styled.div`
    display: flex;
    align-items: center;
    justify-content: space-around;
    width: 332px;
    height: 39px;
    margin-left: auto;
    padding: 14px 0 0 6px;
    background: #89a7c0;
    clip-path: polygon(0 0, 100% 0, 100% 100%, 8px 100%);
`

const SearchBox = styled.div`
    display: flex;
    align-items: center;
    width: 292px;
    height: 38px;
    margin-left: 3px;
    padding-top: 12px;
    background: #fff;

    input {
        flex: 1;
        min-width: 0;
        border: 0;
        background: none;
    }
`

const TopLink = styled.button`
    display: flex;
    justify-content: center;
    width: 40px;
    padding-top: 12px;
    color: #fff;

    & + & {
        width: 58px;
        padding-top: 11px;
    }
`

const ribbon = css`
    display: flex;
    flex: none;
    background: #e6e6e6;
`

const MainRibbon = styled.div`
    ${ribbon}
    height: 138px;
    border-top: 2px solid #dbe9f6;
`

const SimRibbon = styled.div`
    ${ribbon}
    height: 139px;
    padding-top: 3px;
    border-top: 1px solid #cfe6f7;
    border-bottom: 1px solid #a0a0a0;
`

const GroupBox = styled.section`
    display: flex;
    flex-direction: column;
    flex: ${p => (p.$grow ? "1" : "none")};
    width: ${p => (p.$width ? `${p.$width}px` : "auto")};
    border-right: 1px solid #c6c6c6;
`

const GroupBody = styled.div`
    display: flex;
    height: 113px;
`

const GroupTitle = styled.div`
    font-size: 17px;
    line-height: 20px;
    text-align: center;
    color: #666;
`

const BigButton = styled.button`
    display: flex;
    flex: none;
    flex-direction: column;
    align-items: center;
    gap: 8px;
    width: ${p => p.$width}px;
    padding-top: 10px;
    color: ${p => (p.disabled ? "#a5a5a5" : "inherit")};
`

const BigLabel = styled.span`
    display: flex;
    flex-direction: column;
    align-items: center;
    line-height: 24px;
`

const CaretLine = styled.span`
    display: flex;
    align-items: center;
    height: 24px;
    padding-top: 2px;
`

const RowColumn = styled.div`
    display: flex;
    flex-direction: column;
    flex: none;
    width: ${p => (p.$width ? `${p.$width}px` : "auto")};
    padding-top: 2px;
`

const FileRows = styled(RowColumn)`
    padding-top: 20px;
`

const RowButton = styled.button`
    display: flex;
    align-items: center;
    gap: 6px;
    height: 36px;

    span {
        margin-right: ${p => (p.$far ? "8px" : "0")};
    }

    ${SimRibbon} & {
        gap: 8px;
    }
    ${SimRibbon} & span {
        margin-right: 16px;
    }
`

const CollapseButton = styled.button`
    align-self: flex-end;
    margin-left: auto;
    padding: 0 4px 4px 0;
`

const AddressBar = styled.div`
    display: flex;
    align-items: center;
    flex: none;
    gap: 7px;
    height: 34px;
    border-top: 1px solid #7d7d7d;
    background: #f5f5f5;
`

const AddressField = styled.div`
    display: flex;
    align-items: center;
    justify-content: flex-end;
    flex: 1;
    height: 30px;
    padding-right: 6px;
    border: 1px solid #999;
    background: #fff;
`

const AddressSearch = styled(ToolButton)`
    width: 31px;
    height: 30px;
    margin-left: -7px;
    border: 1px solid #a9b8d0;
    background: #e4ebf7;
`

const Panels = styled.div`
    display: flex;
    flex: 1;
    gap: 6px;
    min-height: 0;
`

const LeftPanel = styled.div`
    display: flex;
    flex-direction: column;
    width: 559px;
    padding-bottom: 7px;
    border: 1px solid #b5b5b5;
    border-width: 0 1px 1px 0;
    background: #fff;
`

const PanelHead = styled.div`
    display: flex;
    align-items: center;
    justify-content: ${p => (p.$end ? "flex-end" : "flex-start")};
    flex: none;
    height: 27px;
    padding-right: 3px;
    border-bottom: 1px solid ${p => (p.$end ? "#777" : "#ccc")};
    background: linear-gradient(#fdfdfd, #f1f1f1);
    color: #333;
`

const FileTable = styled.table`
    width: 100%;
    margin-bottom: auto;
    border-collapse: collapse;
    text-align: left;
    font-weight: 400;

    th {
        height: 32px;
        padding: 0 0 0 6px;
        border-right: 1px solid #ddd;
        border-bottom: 1px solid #ddd;
        font-weight: 400;
    }
    th:first-child {
        width: 50px;
        padding-left: 10px;
    }
    td {
        height: 25px;
        padding: 0;
    }
    td:first-child {
        padding-left: 20px;
    }
`

const Selected = styled.tr`
    background: #9c9c9c;
`

const DetailHead = styled.div`
    height: 32px;
    padding: 4px 0;
    border: 1px solid #666;
    border-width: 1px 0;
    background: #f5f5f5;
`

const DetailBody = styled.div`
    display: flex;
    height: 144px;
    padding-top: 6px;
    background: #efefef;
`

const DetailText = styled.dl`
    flex: 1;
    margin: 0;
    padding: 4px 4px 0;
    overflow: hidden;
    border: 1px solid #777;
    border-width: 1px 0;
    background: #fff;

    dt {
        font-weight: 700;
    }
    dd {
        margin: 0;
    }
`

const DetailScroll = styled.div`
    width: 26px;
    border: 1px solid #777;
    border-left: 0;
    background: #e4e4e4;
`

const Thumbnail = styled.div`
    display: flex;
    justify-content: center;
    align-items: flex-end;
    width: 109px;
    margin: 0 6px;
    padding: 0 14px 32px 0;
    border: 1px solid #000;
    background: #fff;
`

const CenterPanel = styled.div`
    display: flex;
    flex: 1;
    border: 1px solid #aaa;
    background: #f6f6f6;
`

const Gutter = styled.div`
    width: 31px;
    background: #e2e2e2;
`

const RightPanel = styled.div`
    display: flex;
    flex-direction: column;
    width: 367px;
    border: 1px solid #777;
    background: #fff;
`

const VarTable = styled.table`
    width: 100%;
    margin-bottom: auto;
    border-collapse: collapse;

    th {
        height: 40px;
        padding: 2px 0 0 6px;
        border-bottom: 1px solid #ddd;
        font-weight: 400;
        text-align: left;
    }
    th:first-child {
        width: 240px;
        border-right: 1px solid #ddd;
    }
`

const ScrollTrack = styled.div`
    height: 25px;
    padding: 7px 31px 7px 26px;
    background: #ededed;
`

const ScrollThumb = styled.div`
    height: 11px;
    background: #858585;
`

const MainStatus = styled.div`
    display: flex;
    align-items: flex-end;
    flex: none;
    height: 24px;
    padding-left: 4px;
`

const Stripes = styled.div`
    width: 15px;
    height: 16px;
    background: repeating-linear-gradient(90deg, #aaa 0 4px, #ddd 4px 6px);
`

const UpMark = styled.i`
    height: 17px;
    padding: 0 4px;
    border-right: 1px solid #888;

    &::after {
        content: "";
        display: block;
        margin-top: 8px;
        border: 3px solid transparent;
        border-top: 0;
        border-bottom: 4px solid #444;
    }
`

const Window = styled.main`
    position: absolute;
    inset: 144px 163px 73px 76px;
    display: flex;
    flex-direction: column;
    overflow: hidden;
    border: 1px solid #a3a3a6;
    border-radius: 12px;
    background: #f0f0f0;
    color: #000;
    box-shadow: 0 24px 56px rgba(0, 0, 0, 0.3), 0 0 24px rgba(0, 0, 0, 0.26);
`

const TitleBar = styled.header`
    display: flex;
    align-items: center;
    flex: none;
    height: 44px;
    padding-left: 12px;
    background: linear-gradient(#eff3fb, #eaf2fb);

    h1 {
        flex: 1;
        margin: 0 0 2px 4px;
        font-size: 17px;
        font-weight: 400;
    }
`

const WinButton = styled(ToolButton)`
    width: 70px;
    height: 44px;
`

const TabBar = styled.div`
    display: flex;
    align-items: flex-end;
    flex: none;
    gap: 9px;
    height: 42px;
    padding-left: 5px;
    background: #003e75;
`

const Tab = styled.button`
    width: 150px;
    height: 37px;
    padding-bottom: 10px;
    border-radius: 3px 3px 0 0;
    font-size: 17px;
    font-weight: ${p => (p.$active ? 400 : 500)};
    color: ${p => (p.$active ? "#111" : "#fff")};
    background: ${p => (p.$active ? "#e6e6e6" : "none")};
`

const QuickTools = styled.div`
    display: flex;
    align-items: center;
    justify-content: space-between;
    align-self: flex-start;
    width: 354px;
    height: 33px;
    margin: 5px 14px 0 auto;
    padding: 0 18px 0 25px;
    background: #628bad;
    clip-path: polygon(10px 0, 100% 0, 100% 100%, 10px 100%, 0 50%);
`

const Gallery = styled.div`
    display: flex;
    flex: 1;
    height: 102px;
    margin: 5px 6px 0 5px;
    border: 2px solid #bdbdbd;
    border-radius: 4px;
    background: #efefef;
`

const GalleryItems = styled.div`
    display: flex;
    flex: 1;
    padding: 7px 0 0 ${p => p.$pad}px;
`

const GalleryButton = styled.button`
    display: flex;
    flex-direction: column;
    align-items: center;
    width: ${p => p.$width}px;
    color: ${p => (p.disabled ? "#a9a9a9" : "inherit")};
`

const GalleryMore = styled(ToolButton)`
    width: 29px;
    border-left: 2px solid #bdbdbd;
    background: #e8e8e8;
`

const SimForm = styled.div`
    display: flex;
    flex-direction: column;
    gap: 4px;
    width: 204px;
    padding: 2px 0 0 6px;
`

const TimeRow = styled.div`
    display: flex;
    align-items: center;
    justify-content: space-between;
    padding-left: 4px;

    input {
        width: 97px;
        height: 33px;
        padding: 0 7px;
        border: 2px solid #949494;
        background: #fff;
    }
`

const SelectBox = styled.div`
    display: grid;
    align-items: center;

    select, i {
        grid-area: 1 / 1;
    }
    i {
        justify-self: end;
        margin-right: 13px;
        pointer-events: none;
    }
    select {
        appearance: none;
        height: 33px;
        padding: 0 6px;
        border: 2px solid #999;
        border-radius: 6px;
        background: linear-gradient(#fbfbfb, #eee);
    }
`

const RestartButton = styled.button`
    display: flex;
    align-items: center;
    gap: 9px;
    height: 35px;
    padding-left: 4px;
`

const RibbonEnd = styled.div`
    display: flex;
    align-items: flex-end;
    width: 139px;

    button {
        padding: 0 6px 0 0;
    }
`

const NavBar = styled.nav`
    display: flex;
    align-items: center;
    flex: none;
    gap: 18px;
    height: 29px;
    padding: 3px 12px 0;
    border-bottom: 2px solid #999;
`

const DocTab = styled.button`
    align-self: stretch;
    width: 93px;
    margin-left: -7px;
    border: 1px solid #ddd;
    border-bottom: 0;
    background: #fff;
    font-family: "Liberation Mono", monospace;
    font-size: 15px;
    color: #444;
`

const NavEnd = styled.div`
    margin-left: auto;
`

const Work = styled.div`
    display: flex;
    flex: 1;
    min-height: 0;
`

const Palette = styled.div`
    display: flex;
    flex-direction: column;
    align-items: center;
    gap: 18px;
    width: 53px;
    padding: 11px 0 10px 1px;

    hr {
        width: 29px;
        margin: -4px 0 0;
        border: 0;
        border-top: 1px solid #999;
    }
`

const Editor = styled.div`
    display: flex;
    flex-direction: column;
    flex: 1;
    margin-right: 2px;
    border: 1px solid #848484;
    border-top: 0;
    background: #fff;
`

const Crumbs = styled.div`
    display: flex;
    align-items: center;
    flex: none;
    gap: 4px;
    height: 44px;
    padding: 0 6px 2px 2px;
    border-bottom: 1px solid #888;
`

const CrumbArrow = styled.i`
    margin: 0 5px 0 6px;
    border: 7px solid transparent;
    border-left: 8px solid #000;
    border-right: 0;
`

const CrumbEnd = styled.button`
    margin-left: auto;
`

const InfoBar = styled.div`
    display: flex;
    align-items: center;
    flex: none;
    height: 40px;
    margin-top: 2px;
    padding: 0 7px;
    border: 1px solid #858585;
    border-width: 1px 0;
    background: #fdfbc9;
    font-family: "Liberation Sans", "Noto Sans CJK SC", sans-serif;
    font-size: 14px;
    color: #333;

    p {
        flex: 1;
        margin: 0 7px;
    }
    a {
        color: #1a1ad0;
    }
`

const InfoMore = styled(ToolButton)`
    align-self: flex-start;
    width: 28px;
    height: 28px;
    margin-top: 2px;
    border: 1px solid #d5d5d5;
    border-radius: 4px;
    background: #fff;
`

const Canvas = styled.div`
    flex: 1;
    min-height: 0;
`

const DiagramSvg = styled.svg`
    width: 100%;
    height: 100%;
    font-family: "Liberation Sans", sans-serif;
    font-size: 15px;
`

const StatusBar = styled.footer`
    display: grid;
    grid-template-columns: 1134fr 546fr 500fr 85fr 32px;
    align-items: center;
    flex: none;
    height: 31px;
    padding-left: 6px;
    border-top: 1px solid #848484;
`

const StatusLink = styled.a`
    color: #17176e;
    text-decoration: none;
    text-align: ${p => (p.$end ? "right" : "left")};
`

const Grip = styled.div`
    display: flex;
    align-items: flex-end;
    justify-content: flex-end;
    height: 22px;
    margin-left: 10px;
    padding-right: 2px;
    border-left: 1px solid #ccc;
`
